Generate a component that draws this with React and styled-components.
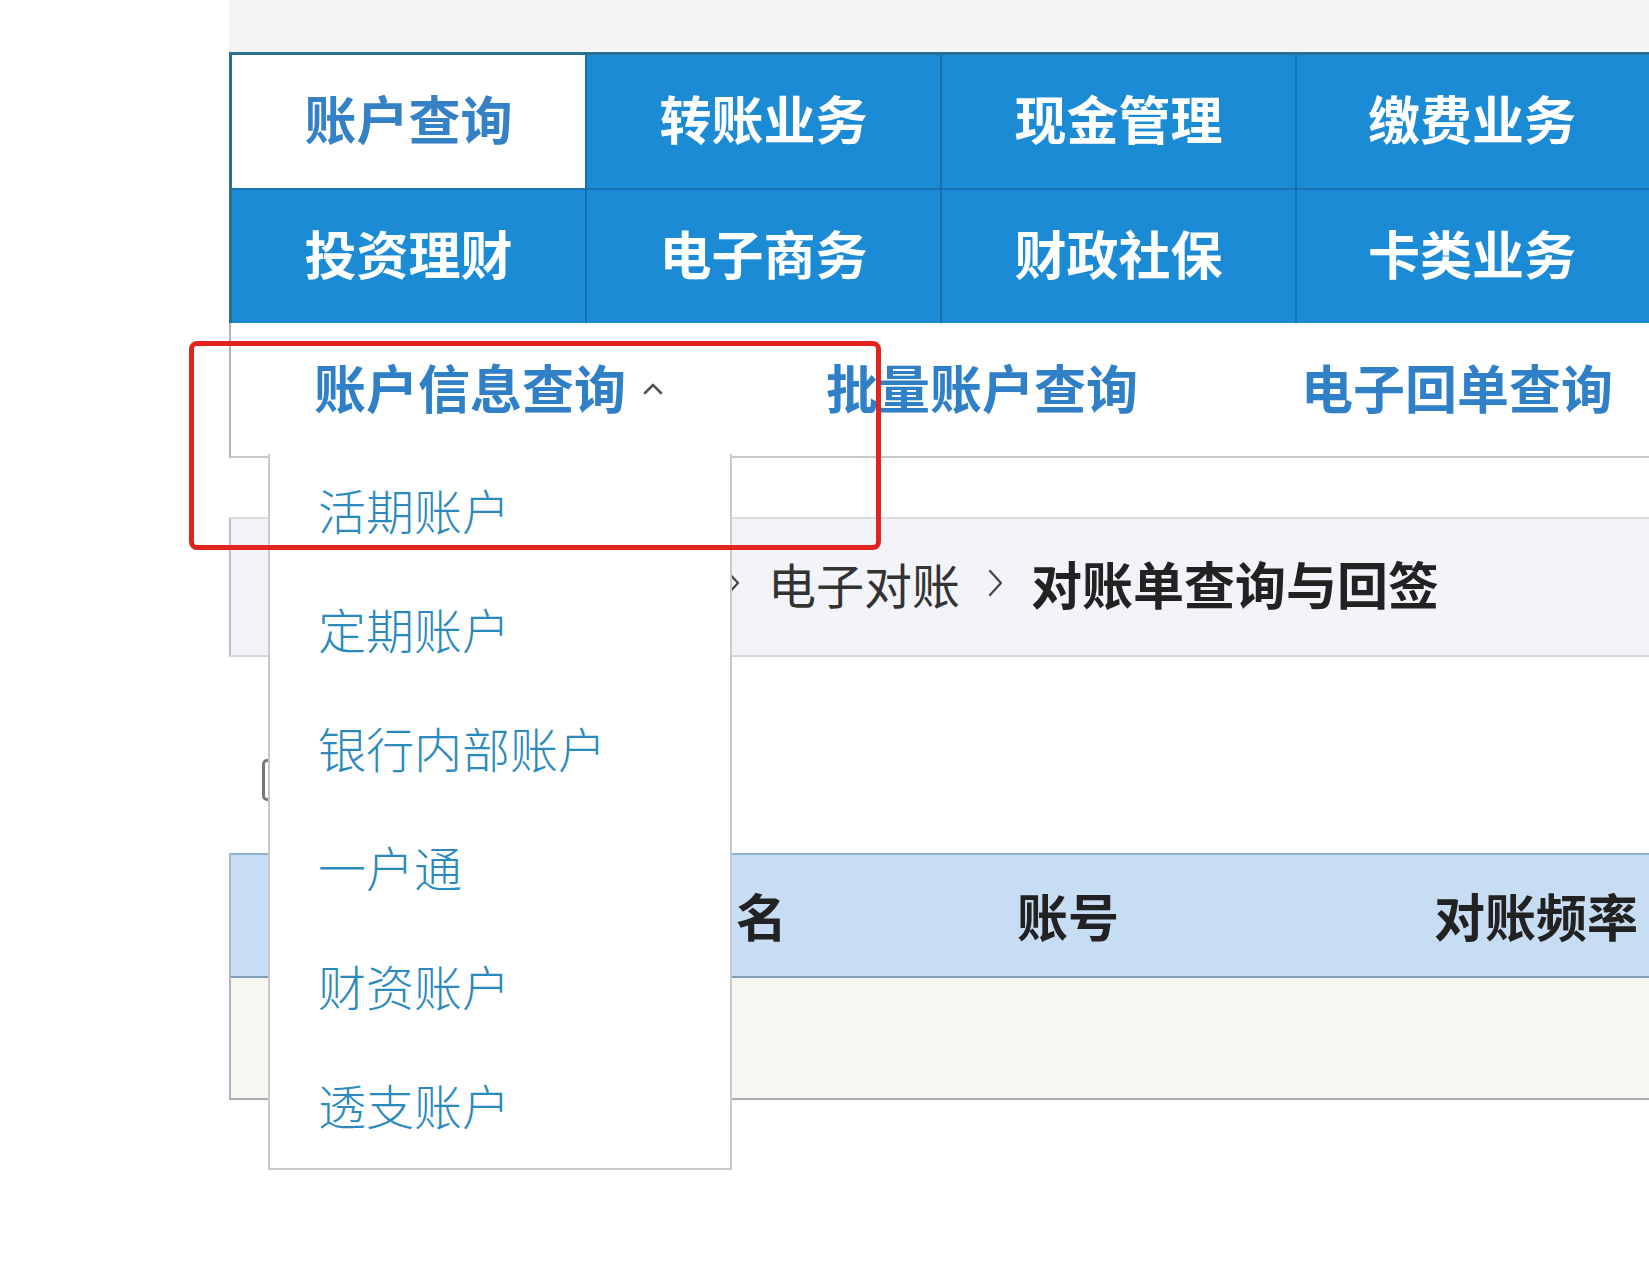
import React from "react";
import styled, { createGlobalStyle } from "styled-components";

const GlobalStyle = createGlobalStyle`
  html, body {
    margin: 0;
    padding: 0;
    background: #fff;
    overflow: hidden;
  }
  body {
    font-family: "Noto Sans CJK SC", "Noto Sans", sans-serif;
  }
`;

const topTabs = [
  ["账户查询", "转账业务", "现金管理", "缴费业务"],
  ["投资理财", "电子商务", "财政社保", "卡类业务"],
];

const subMenus = ["账户信息查询", "批量账户查询", "电子回单查询"];

const accountTypes = [
  "活期账户",
  "定期账户",
  "银行内部账户",
  "一户通",
  "财资账户",
  "透支账户",
];

// first column sits under the open dropdown
const columns = [
  { title: "", width: 341 },
  { title: "户名", width: 328 },
  { title: "账号", width: 336 },
  { title: "对账频率", width: 600 },
];

function ChevronUp() {
  return (
    <svg width="20" height="12" viewBox="0 0 20 12">
      <polyline
        points="2,10 10,2 18,10"
        fill="none"
        stroke="#555"
        strokeWidth="2.6"
        strokeLinecap="round"
        strokeLinejoin="round"
      />
    </svg>
  );
}

function ChevronRight() {
  return (
    <svg width="19" height="28" viewBox="0 0 19 28">
      <polyline
        points="4,2 15,14 4,26"
        fill="none"
        stroke="#444"
        strokeWidth="2.2"
        strokeLinecap="round"
        strokeLinejoin="round"
      />
    </svg>
  );
}

function App() {
  return (
    <Root>
      <GlobalStyle />
      <Page>
        <TopStrip />
        <Nav>
          {topTabs.flat().map((t, i) => (
            <Tab key={t} active={i === 0}>
              {t}
            </Tab>
          ))}
        </Nav>

        <SubNav>
          {subMenus.map((m, i) => (
            <SubItem key={m}>
              {m}
              {i === 0 && (
                <Caret>
                  <ChevronUp />
                </Caret>
              )}
            </SubItem>
          ))}
          <Dropdown>
            {accountTypes.map((a) => (
              <DropItem key={a}>{a}</DropItem>
            ))}
          </Dropdown>
        </SubNav>

        <Breadcrumb>
          <Crumb>账户查询</Crumb>
          <ChevronRight />
          <Crumb>电子对账</Crumb>
          <ChevronRight />
          <Crumb current>对账单查询与回签</Crumb>
        </Breadcrumb>

        <FilterRow>
          <FilterBox />
        </FilterRow>

        <Table>
          <HeadRow>
            {columns.map((c, i) => (
              <HeadCell key={i} w={c.width}>
                {c.title}
              </HeadCell>
            ))}
          </HeadRow>
          <BodyRow />
        </Table>
      </Page>
      <Highlight />
    </Root>
  );
}

export default App;

const Root = styled.div`
  position: relative;
  width: 1649px;
  height: 1280px;
  overflow: hidden;
  background: #fff;
`;

const Page = styled.div`
  margin-left: 229px;
  width: 1800px;
  display: flex;
  flex-direction: column;
`;

const TopStrip = styled.div`
  height: 52px;
  background: #f5f5f5;
`;

const Nav = styled.div`
  display: grid;
  grid-template-columns: repeat(4, 353px) 1fr;
  grid-auto-rows: 133px;
  gap: 2px;
  background: #1670b0;
  border-top: 3px solid #2a6f8d;
  border-left: 3px solid #2a6f8d;
  & > :nth-child(4n) {
    grid-column: 4 / 6;
  }
`;

const Tab = styled.div`
  display: flex;
  align-items: center;
  justify-content: center;
  padding-bottom: 8px;
  box-sizing: border-box;
  background: ${(p) => (p.active ? "#fff" : "#1c8bd5")};
  color: ${(p) => (p.active ? "#3581c6" : "#fff")};
  font-size: 52px;
  font-weight: 700;
  line-height: 1;
  &:nth-child(4n) {
    justify-content: flex-start;
    padding-left: 71px;
  }
`;

const SubNav = styled.div`
  position: relative;
  height: 127px;
  display: flex;
  align-items: center;
  gap: 163px;
  padding-left: 83px;
  padding-bottom: 6px;
  border-left: 2px solid #b4b4b4;
  border-bottom: 2px solid #c8c8c8;
  background: #fff;
`;

const SubItem = styled.div`
  display: flex;
  align-items: center;
  font-size: 52px;
  font-weight: 600;
  line-height: 1;
  color: #2f80c6;
  white-space: nowrap;
`;

const Caret = styled.span`
  display: flex;
  margin-left: 17px;
  margin-top: 4px;
`;

const Dropdown = styled.div`
  position: absolute;
  top: 131px;
  left: 37px;
  width: 460px;
  display: flex;
  flex-direction: column;
  background: #fff;
  border: 2px solid #c8c8c8;
  border-top: none;
  z-index: 5;
`;

const DropItem = styled.div`
  height: 119px;
  box-sizing: border-box;
  display: flex;
  align-items: center;
  padding-left: 48px;
  padding-bottom: 10px;
  font-size: 48px;
  font-weight: 300;
  line-height: 1;
  color: #2b8abd;
`;

const Breadcrumb = styled.div`
  margin-top: 59px;
  height: 128px;
  display: flex;
  align-items: center;
  gap: 26px;
  padding-left: 274px;
  padding-bottom: 8px;
  background: #f3f4fa;
  border-top: 2px solid #dcdde2;
  border-bottom: 2px solid #d6d7dc;
  border-left: 2px solid #c0c0c0;
  color: #333;
`;

const Crumb = styled.span`
  font-size: ${(p) => (p.current ? "51px" : "48px")};
  font-weight: ${(p) => (p.current ? 700 : 400)};
  color: ${(p) => (p.current ? "#222" : "#333")};
  line-height: 1;
  white-space: nowrap;
`;

const FilterRow = styled.div`
  height: 196px;
  box-sizing: border-box;
  padding-top: 102px;
  padding-left: 33px;
`;

const FilterBox = styled.div`
  width: 220px;
  height: 36px;
  border: 3px solid #777;
  border-radius: 5px;
`;

const Table = styled.div`
  display: flex;
  flex-direction: column;
  border-left: 2px solid #a9b6c4;
`;

const HeadRow = styled.div`
  display: flex;
  height: 121px;
  background: #c7ddf3;
  border-top: 2px solid #8fb0cc;
  border-bottom: 2px solid #7f9dba;
`;

const HeadCell = styled.div`
  flex: 0 0 ${(p) => p.w}px;
  display: flex;
  align-items: center;
  justify-content: center;
  font-size: 51px;
  font-weight: 700;
  line-height: 1;
  color: #222;
`;

const BodyRow = styled.div`
  height: 120px;
  background: #f6f7f3;
  border-bottom: 2px solid #b0b0b0;
`;

const Highlight = styled.div`
  position: absolute;
  left: 189px;
  top: 341px;
  width: 692px;
  height: 209px;
  box-sizing: border-box;
  border: 5px solid #e3231e;
  border-radius: 8px;
  pointer-events: none;
  z-index: 10;
`;
